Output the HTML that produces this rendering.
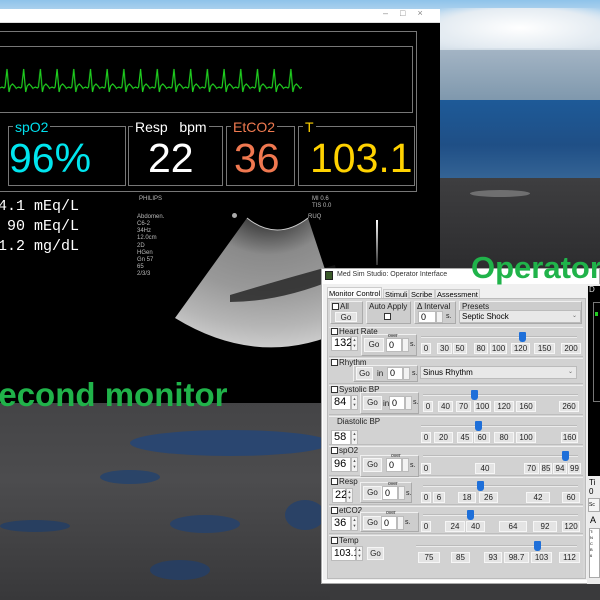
<!DOCTYPE html>
<html><head><meta charset="utf-8"><style>
*{margin:0;padding:0;box-sizing:border-box}
body{width:600px;height:600px;overflow:hidden;position:relative;font-family:"Liberation Sans",sans-serif;background:#3a3a3c}
.a{position:absolute}
.b{position:absolute;background:#e4e4e4;border:1px solid #f6f6f6;font-size:8px;color:#222;text-align:center;height:11px;line-height:9px}
.in{position:absolute;background:#fff;border:1px solid #bbb;font-size:11px;color:#000;height:15px;line-height:13px;padding-left:2px}
.sp{position:absolute;background:#f2f2f2;border:1px solid #bbb;width:7px;height:15px;font-size:4px;text-align:center;line-height:6px;color:#555}
.lab{position:absolute;font-size:8px;color:#222;white-space:nowrap}
.sec{position:absolute;left:329px;width:254px;border-top:1px solid #eee;border-bottom:1px solid #bdbdbd;background:#d2d2d2}
.gg{position:absolute;border:1px solid #f0f0f0;border-right-color:#aaa;border-bottom-color:#aaa;background:#cdcdcd}
.line{position:absolute;height:2px;background:#ececec;border-top:1px solid #bbb}
.th{position:absolute;width:7px;height:10px;background:#1e6fd9;border-radius:1px 1px 3px 3px}
.cb{display:inline-block;width:7px;height:7px;border:1px solid #333;background:#fff;vertical-align:-1px;margin-right:1px}
.vl{position:absolute;font-size:14px;top:119px}
.vb{position:absolute;border:1px solid #777;top:126px;height:60px}
.mono{position:absolute;font-family:"Liberation Mono",monospace;color:#fff;font-size:15px}
.us{position:absolute;font-size:6px;color:#bbb;font-family:"Liberation Sans",sans-serif;line-height:7px}
.tab{position:absolute;top:289px;height:10px;background:#eaeaea;border:1px solid #ccc;font-size:7.5px;line-height:9px;padding-left:1px;white-space:nowrap}
</style></head><body>
<div class="a" style="left:0;top:0;width:600px;height:60px;background:linear-gradient(#8fc3ea,#e6eef5 50%,#cdd8e2)"></div>
<div class="a" style="left:440px;top:8px;width:160px;height:40px;background:radial-gradient(ellipse at 50% 50%,#fff,#e5ecf2 70%,transparent)"></div>
<div class="a" style="left:440px;top:50px;width:160px;height:50px;background:linear-gradient(#a3b4c4,#7f98ad)"></div>
<div class="a" style="left:440px;top:100px;width:160px;height:90px;background:linear-gradient(#1e5a98,#1f4f86 50%,#3c6b9a)"></div>
<div class="a" style="left:440px;top:178px;width:160px;height:95px;background:linear-gradient(#3e3e40,#2c2c2e)"></div>
<div class="a" style="left:470px;top:190px;width:60px;height:7px;background:#6f6f70;border-radius:50%"></div>
<div class="a" style="left:0;top:400px;width:330px;height:200px;background:linear-gradient(#444446,#4c4c4e 40%,#38383a)"></div>
<div class="a" style="left:130px;top:430px;width:200px;height:26px;background:#2a4670;border-radius:50%"></div>
<div class="a" style="left:100px;top:470px;width:60px;height:14px;background:#2a4468;border-radius:50%"></div>
<div class="a" style="left:0;top:520px;width:70px;height:12px;background:#283f60;border-radius:50%"></div>
<div class="a" style="left:170px;top:515px;width:70px;height:18px;background:#2a4266;border-radius:50%"></div>
<div class="a" style="left:150px;top:560px;width:60px;height:20px;background:#283e60;border-radius:50%"></div>
<div class="a" style="left:285px;top:500px;width:40px;height:30px;background:#2a4266;border-radius:50%"></div>

<div class="a" style="left:0;top:9px;width:440px;height:14px;background:#fff;border-bottom:1px solid #ddd"></div>
<div class="a" style="left:383px;top:8px;font-size:9px;color:#888;letter-spacing:12px">–□×</div>
<div class="a" style="left:0;top:23px;width:440px;height:380px;background:#000"></div>
<div class="a" style="left:-2px;top:31px;width:419px;height:161px;border:1px solid #777;border-left:none"></div>
<div class="a" style="left:-2px;top:46px;width:415px;height:67px;border:1px solid #777"></div>
<svg class="a" style="left:0;top:60px" width="305" height="40">
<defs><pattern id="ecg" x="0" y="0" width="16.7" height="40" patternUnits="userSpaceOnUse">
<path d="M0 28 l2 -1 l2 1 l1 -1 l2 -18 l2 23 l1.5 -6 l2 -2 l2 2 l2.2 3" fill="none" stroke="#1fd01f" stroke-width="1.2"/></pattern></defs>
<rect x="0" y="0" width="302" height="40" fill="url(#ecg)"/></svg>
<div class="vb" style="left:8px;width:118px"></div>
<div class="vb" style="left:128px;width:95px"></div>
<div class="vb" style="left:226px;width:69px"></div>
<div class="vb" style="left:298px;width:117px"></div>
<div class="vl" style="left:13px;color:#00e0ee;background:#000;padding:0 2px">spO2</div>
<div class="vl" style="left:133px;color:#fff;background:#000;padding:0 2px">Resp&nbsp;&nbsp;&nbsp;bpm</div>
<div class="vl" style="left:231px;color:#f07a50;background:#000;padding:0 2px">EtCO2</div>
<div class="vl" style="left:303px;color:#ffd200;background:#000;padding:0 2px">T</div>
<div class="a" style="left:9px;top:136px;font-size:41px;color:#00e5ee;line-height:44px">96%</div>
<div class="a" style="left:148px;top:136px;font-size:41px;color:#fff;line-height:44px">22</div>
<div class="a" style="left:234px;top:136px;font-size:41px;color:#f07850;line-height:44px">36</div>
<div class="a" style="left:310px;top:136px;font-size:41px;color:#ffd200;line-height:44px">103.1</div>
<div class="mono" style="left:-2px;top:198px">4.1 mEq/L</div>
<div class="mono" style="left:-2px;top:218px">&nbsp;90 mEq/L</div>
<div class="mono" style="left:-2px;top:238px">1.2 mg/dL</div>
<svg class="a" style="left:170px;top:210px" width="180" height="150">
<defs><radialGradient id="ug" cx="0.55" cy="-0.1" r="1.1"><stop offset="0.15" stop-color="#444"/><stop offset="0.35" stop-color="#8a8a8a"/><stop offset="0.6" stop-color="#999"/><stop offset="0.85" stop-color="#b5b5b5"/><stop offset="1" stop-color="#ccc"/></radialGradient></defs>
<path d="M77 8 Q107 32 138 8 L175 120 Q90 160 5 108 Z" fill="url(#ug)"/>
<path d="M60 85 Q110 70 165 55 L168 68 Q110 92 60 92Z" fill="#1a1a1a" opacity=".75"/>
<path d="M77 8 Q107 32 138 8" fill="none" stroke="#ccc" stroke-width="1"/>
</svg>
<div class="us" style="left:139px;top:196px">PHILIPS</div>
<div class="us" style="left:137px;top:214px">Abdomen.<br>C6-2<br>34Hz<br>12.0cm</div>
<div class="us" style="left:137px;top:243px">2D<br>HGen<br>Gn 57<br>65<br>2/3/3</div>
<div class="us" style="left:312px;top:196px">MI 0.6<br>TIS 0.0</div>
<div class="us" style="left:308px;top:214px">RUQ</div>
<div class="a" style="left:232px;top:213px;width:5px;height:5px;border-radius:50%;background:#aaa"></div>
<div class="a" style="left:376px;top:220px;width:2px;height:45px;background:linear-gradient(#fff,#333)"></div>

<div class="a" style="left:-20px;top:376px;font-size:33px;font-weight:bold;color:#20b34a">second monitor</div>

<div class="a" style="left:321px;top:268px;width:279px;height:316px;background:#fff;border:1px solid #aaa"></div>
<div class="a" style="left:325px;top:271px;width:8px;height:9px;background:#3a5a2a;border:1px solid #222"></div>
<div class="a" style="left:337px;top:271px;font-size:7px;color:#333">Med Sim Studio: Operator Interface</div>
<div class="a" style="left:323px;top:284px;width:264px;height:296px;background:#f0f0f0"></div>
<div class="a" style="left:327px;top:287px;width:55px;height:12px;background:#fafafa;border:1px solid #ccc;border-bottom:none;font-size:7.5px;padding-left:1px;line-height:11px;white-space:nowrap">Monitor Control</div>
<div class="tab" style="left:383px;width:26px">Stimuli</div>
<div class="tab" style="left:409px;width:26px">Scribe</div>
<div class="tab" style="left:435px;width:45px">Assessment</div>
<div class="a" style="left:327px;top:298px;width:259px;height:281px;background:#d6d6d6;border:1px solid #bbb"></div>
<div class="gg" style="left:330px;top:301px;width:33px;height:23px"></div>
<div class="lab" style="left:332px;top:302px"><span class="cb"></span>All</div>
<div class="b" style="left:335px;top:312px;width:22px;height:10px">Go</div>
<div class="gg" style="left:366px;top:301px;width:45px;height:23px"></div>
<div class="lab" style="left:369px;top:302px">Auto Apply</div>
<div class="a" style="left:384px;top:313px;width:7px;height:7px;border:1px solid #333;background:#fff"></div>
<div class="gg" style="left:414px;top:301px;width:42px;height:23px"></div>
<div class="lab" style="left:417px;top:302px">Δ Interval</div>
<div class="in" style="left:418px;top:311px;width:18px;height:12px;font-size:9px;line-height:10px">0</div>
<div class="sp" style="left:436px;top:311px;height:12px"></div>
<div class="lab" style="left:446px;top:313px;font-size:7px">s.</div>
<div class="gg" style="left:459px;top:301px;width:123px;height:23px"></div>
<div class="lab" style="left:462px;top:302px">Presets</div>
<div class="a" style="left:459px;top:310px;width:122px;height:13px;background:#e8e8e8;border:1px solid #bbb;font-size:8px;padding-left:2px;line-height:11px">Septic Shock<span style="position:absolute;right:3px;font-size:6px;color:#666">⌄</span></div>

<div class="sec" style="top:327px;height:30px"></div>
<div class="lab" style="left:331px;top:327px"><span class="cb"></span>Heart Rate</div>
<div class="in" style="left:331px;top:336px;width:20px">132</div><div class="sp" style="left:351px;top:336px">▲<br>▼</div>
<div class="gg" style="left:361px;top:334px;width:56px;height:22px"></div>
<div class="b" style="left:364px;top:338px;width:20px;height:14px;line-height:12px;font-size:8px">Go</div>
<div class="lab" style="left:388px;top:333px;font-size:5px">over</div>
<div class="in" style="left:386px;top:338px;width:16px;height:14px;font-size:9px;line-height:12px">0</div><div class="sp" style="left:402px;top:338px;height:14px"></div>
<div class="lab" style="left:410px;top:341px;font-size:7px">s.</div>
<div class="line" style="left:421px;top:336px;width:156px"></div><div class="th" style="left:519px;top:332px"></div>
<div class="b" style="left:421px;top:343px;width:10px">0</div><div class="b" style="left:437px;top:343px;width:15px">30</div><div class="b" style="left:453px;top:343px;width:14px">50</div><div class="b" style="left:474px;top:343px;width:14px">80</div><div class="b" style="left:490px;top:343px;width:17px">100</div><div class="b" style="left:511px;top:343px;width:19px">120</div><div class="b" style="left:534px;top:343px;width:21px">150</div><div class="b" style="left:561px;top:343px;width:20px">200</div>

<div class="sec" style="top:358px;height:26px"></div>
<div class="lab" style="left:331px;top:358px"><span class="cb"></span>Rhythm</div>
<div class="gg" style="left:353px;top:365px;width:65px;height:17px"></div>
<div class="b" style="left:356px;top:367px;width:17px;height:13px;line-height:11px;font-size:8px">Go</div>
<div class="lab" style="left:377px;top:369px">in</div>
<div class="in" style="left:387px;top:367px;width:16px;height:13px;font-size:9px;line-height:11px">0</div><div class="sp" style="left:403px;top:367px;height:13px"></div>
<div class="lab" style="left:412px;top:370px;font-size:7px">s.</div>
<div class="a" style="left:420px;top:366px;width:157px;height:13px;background:#e8e8e8;border:1px solid #bbb;font-size:8px;padding-left:2px;line-height:11px">Sinus Rhythm<span style="position:absolute;right:3px;font-size:6px;color:#666">⌄</span></div>

<div class="sec" style="top:385px;height:30px"></div>
<div class="lab" style="left:331px;top:385px"><span class="cb"></span>Systolic BP</div>
<div class="in" style="left:331px;top:395px;width:20px">84</div><div class="sp" style="left:351px;top:395px">▲<br>▼</div>
<div class="gg" style="left:360px;top:392px;width:59px;height:22px"></div>
<div class="b" style="left:363px;top:396px;width:19px;height:14px;line-height:12px;font-size:8px">Go</div>
<div class="lab" style="left:383px;top:399px">in</div>
<div class="in" style="left:389px;top:396px;width:16px;height:14px;font-size:9px;line-height:12px">0</div><div class="sp" style="left:405px;top:396px;height:14px"></div>
<div class="lab" style="left:413px;top:399px;font-size:7px">s.</div>
<div class="line" style="left:423px;top:394px;width:155px"></div><div class="th" style="left:471px;top:390px"></div>
<div class="b" style="left:423px;top:401px;width:10px">0</div><div class="b" style="left:438px;top:401px;width:15px">40</div><div class="b" style="left:456px;top:401px;width:15px">70</div><div class="b" style="left:474px;top:401px;width:17px">100</div><div class="b" style="left:494px;top:401px;width:20px">120</div><div class="b" style="left:516px;top:401px;width:20px">160</div><div class="b" style="left:559px;top:401px;width:20px">260</div>

<div class="sec" style="top:416px;height:29px"></div>
<div class="lab" style="left:337px;top:417px">Diastolic BP</div>
<div class="in" style="left:331px;top:430px;width:20px">58</div><div class="sp" style="left:351px;top:430px">▲<br>▼</div>
<div class="line" style="left:421px;top:425px;width:156px"></div><div class="th" style="left:475px;top:421px"></div>
<div class="b" style="left:421px;top:432px;width:10px">0</div><div class="b" style="left:434px;top:432px;width:19px">20</div><div class="b" style="left:457px;top:432px;width:16px">45</div><div class="b" style="left:474px;top:432px;width:16px">60</div><div class="b" style="left:494px;top:432px;width:20px">80</div><div class="b" style="left:516px;top:432px;width:20px">100</div><div class="b" style="left:561px;top:432px;width:17px">160</div>

<div class="sec" style="top:446px;height:30px"></div>
<div class="lab" style="left:331px;top:446px"><span class="cb"></span>spO2</div>
<div class="in" style="left:331px;top:457px;width:20px">96</div><div class="sp" style="left:351px;top:457px">▲<br>▼</div>
<div class="gg" style="left:360px;top:455px;width:59px;height:22px"></div>
<div class="b" style="left:363px;top:458px;width:19px;height:14px;line-height:12px;font-size:8px">Go</div>
<div class="lab" style="left:391px;top:453px;font-size:5px">over</div>
<div class="in" style="left:386px;top:458px;width:16px;height:14px;font-size:9px;line-height:12px">0</div><div class="sp" style="left:402px;top:458px;height:14px"></div>
<div class="lab" style="left:410px;top:462px;font-size:7px">s.</div>
<div class="line" style="left:423px;top:455px;width:155px"></div><div class="th" style="left:562px;top:451px"></div>
<div class="b" style="left:421px;top:463px;width:10px">0</div><div class="b" style="left:475px;top:463px;width:20px">40</div><div class="b" style="left:524px;top:463px;width:15px">70</div><div class="b" style="left:540px;top:463px;width:12px">85</div><div class="b" style="left:553px;top:463px;width:14px">94</div><div class="b" style="left:568px;top:463px;width:13px">99</div>

<div class="sec" style="top:477px;height:28px"></div>
<div class="lab" style="left:331px;top:477px"><span class="cb"></span>Resp</div>
<div class="in" style="left:332px;top:488px;width:14px">22</div><div class="sp" style="left:346px;top:488px">▲<br>▼</div>
<div class="gg" style="left:360px;top:482px;width:52px;height:21px"></div>
<div class="b" style="left:363px;top:486px;width:19px;height:14px;line-height:12px;font-size:8px">Go</div>
<div class="lab" style="left:388px;top:481px;font-size:5px">over</div>
<div class="in" style="left:382px;top:486px;width:16px;height:14px;font-size:9px;line-height:12px">0</div><div class="sp" style="left:398px;top:486px;height:14px"></div>
<div class="lab" style="left:406px;top:490px;font-size:7px">s.</div>
<div class="line" style="left:423px;top:485px;width:155px"></div><div class="th" style="left:477px;top:481px"></div>
<div class="b" style="left:421px;top:492px;width:10px">0</div><div class="b" style="left:433px;top:492px;width:12px">6</div><div class="b" style="left:458px;top:492px;width:18px">18</div><div class="b" style="left:479px;top:492px;width:19px">26</div><div class="b" style="left:526px;top:492px;width:24px">42</div><div class="b" style="left:562px;top:492px;width:18px">60</div>

<div class="sec" style="top:506px;height:28px"></div>
<div class="lab" style="left:331px;top:506px"><span class="cb"></span>etCO2</div>
<div class="in" style="left:331px;top:516px;width:20px">36</div><div class="sp" style="left:351px;top:516px">▲<br>▼</div>
<div class="gg" style="left:360px;top:512px;width:59px;height:20px"></div>
<div class="b" style="left:363px;top:516px;width:19px;height:14px;line-height:12px;font-size:8px">Go</div>
<div class="lab" style="left:386px;top:510px;font-size:5px">over</div>
<div class="in" style="left:381px;top:516px;width:16px;height:14px;font-size:9px;line-height:12px">0</div><div class="sp" style="left:397px;top:516px;height:14px"></div>
<div class="lab" style="left:405px;top:519px;font-size:7px">s.</div>
<div class="line" style="left:423px;top:514px;width:155px"></div><div class="th" style="left:467px;top:510px"></div>
<div class="b" style="left:421px;top:521px;width:10px">0</div><div class="b" style="left:445px;top:521px;width:20px">24</div><div class="b" style="left:466px;top:521px;width:19px">40</div><div class="b" style="left:499px;top:521px;width:28px">64</div><div class="b" style="left:533px;top:521px;width:24px">92</div><div class="b" style="left:562px;top:521px;width:18px">120</div>

<div class="sec" style="top:535px;height:43px;border-bottom:none"></div>
<div class="lab" style="left:331px;top:536px"><span class="cb"></span>Temp</div>
<div class="in" style="left:331px;top:546px;width:25px;font-size:10px">103.1</div><div class="sp" style="left:356px;top:546px">▲<br>▼</div>
<div class="b" style="left:367px;top:547px;width:17px;height:13px;line-height:11px;font-size:8px">Go</div>
<div class="line" style="left:416px;top:545px;width:161px"></div><div class="th" style="left:534px;top:541px"></div>
<div class="b" style="left:418px;top:552px;width:22px">75</div><div class="b" style="left:451px;top:552px;width:19px">85</div><div class="b" style="left:484px;top:552px;width:18px">93</div><div class="b" style="left:504px;top:552px;width:25px">98.7</div><div class="b" style="left:531px;top:552px;width:21px">103</div><div class="b" style="left:559px;top:552px;width:21px">112</div>

<div class="a" style="left:587px;top:284px;width:13px;height:300px;background:#ececec"></div>
<div class="a" style="left:588px;top:286px;width:12px;height:190px;background:#000"></div>
<div class="a" style="left:589px;top:285px;font-size:8px;color:#ddd">D</div>
<div class="a" style="left:593px;top:302px;width:7px;height:100px;border:1px solid #777;border-right:none"></div>
<div class="a" style="left:595px;top:312px;width:3px;height:4px;background:#2c2"></div>
<div class="a" style="left:589px;top:478px;font-size:8px">Ti<br>0</div>
<div class="a" style="left:588px;top:498px;width:12px;height:14px;border:1px solid #aaa;background:#f5f5f5;font-size:5px;line-height:12px">Sc</div>
<div class="a" style="left:590px;top:515px;font-size:9px">A</div>
<div class="a" style="left:589px;top:528px;width:11px;height:50px;background:#fff;border:1px solid #aaa;font-size:4px;line-height:6px">T:<br>N<br>C<br>B<br>6</div>

<div class="a" style="left:471px;top:250px;font-size:31px;font-weight:bold;color:#20b34a">Operator</div>
</body></html>
